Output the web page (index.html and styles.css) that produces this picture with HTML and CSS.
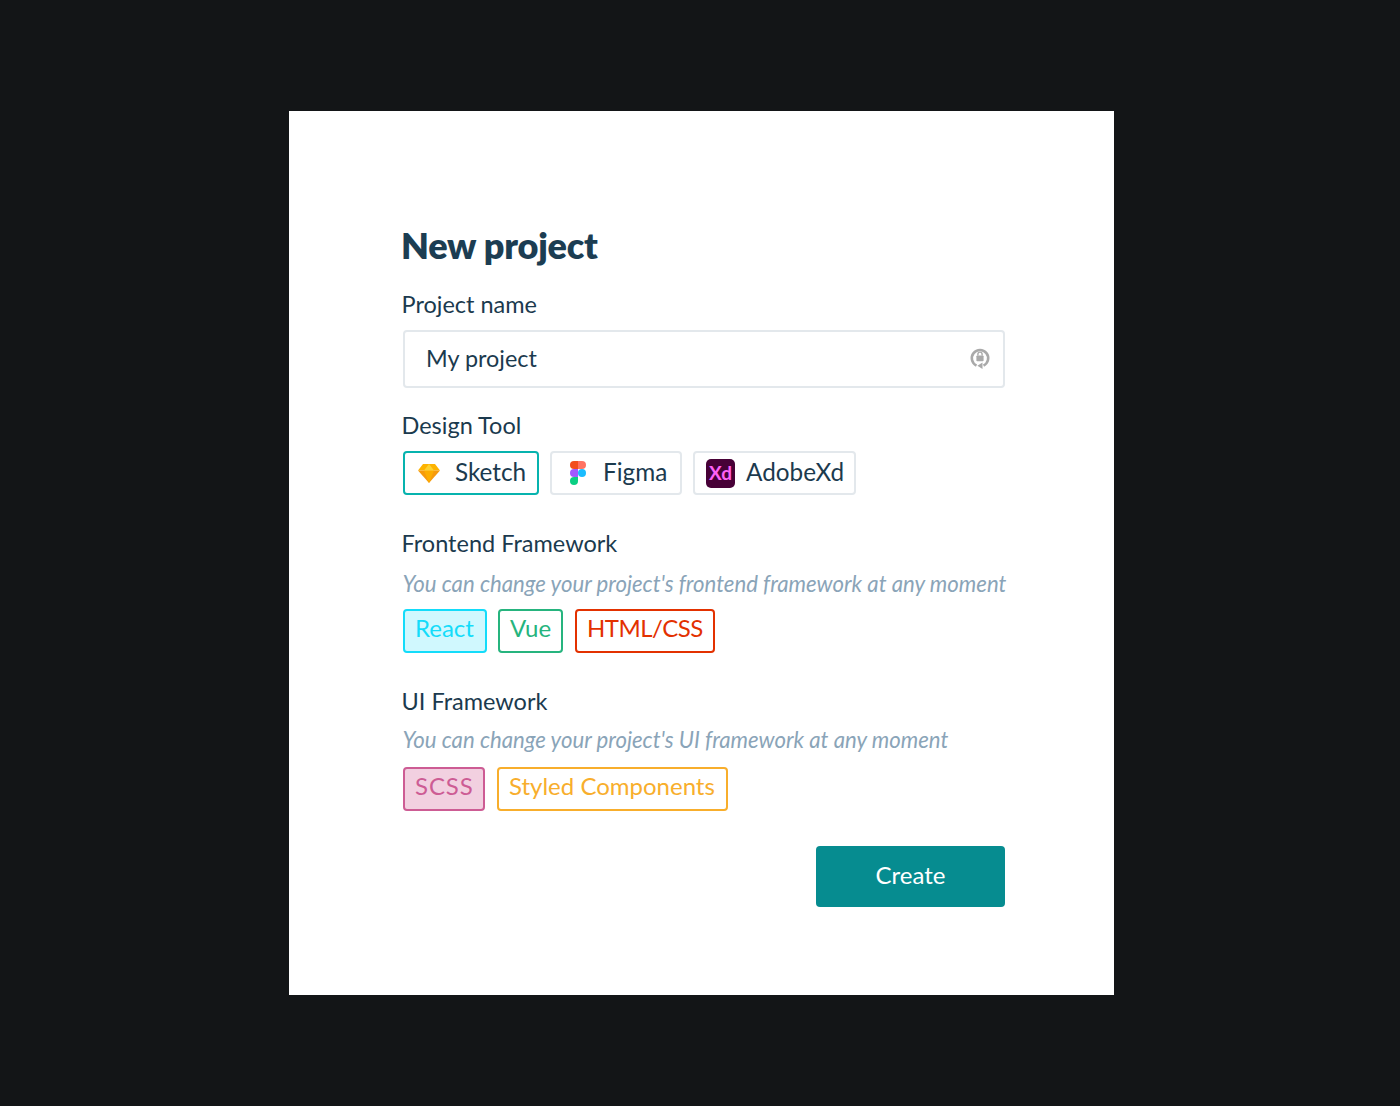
FILE: index.html
```html
<!DOCTYPE html>
<html lang="en">

<head>
    <meta charset="UTF-8">
    <meta name="viewport" content="width=device-width, initial-scale=1.0">
    <title>New project</title>
    <link rel="stylesheet" href="styles.css">
</head>

<body>
    <div class="card">
        <h1 class="title">New project</h1>

        <div class="label label-name">Project name</div>
        <div class="name-input">
            <span class="input-text">My project</span>
            <svg class="lock-icon" width="22" height="24" viewBox="0 0 22 24">
                <path d="M7.5 19.6A8.2 8.2 0 1 1 14.5 19.6" fill="none" stroke="#a9a9a9" stroke-width="2.6" />
                <path d="M13.5 16.6V23L8.4 19.8Z" fill="#a9a9a9" />
                <rect x="7.4" y="9.4" width="7.2" height="5.8" rx="0.8" fill="#a9a9a9" />
                <path d="M8.9 9.6V8.2a2.1 2.1 0 0 1 4.2 0V9.6" fill="none" stroke="#a9a9a9" stroke-width="1.4" />
            </svg>
        </div>

        <div class="label label-tool">Design Tool</div>
        <div class="chip-row tool-row">
            <div class="chip tool-chip sketch-chip">
                <svg class="sketch-icon" width="22" height="20" viewBox="0 0 22 20">
                    <path d="M5 1H17L22 7.5H0Z" fill="#fdb300" />
                    <path d="M0 7.5H22L11 20Z" fill="#f69a0c" />
                    <path d="M6 7.5H16L11 20Z" fill="#fdad00" />
                    <path d="M6 7.5L11 1L16 7.5Z" fill="#fdd231" />
                </svg>
                <span class="chip-text">Sketch</span>
            </div>
            <div class="chip tool-chip figma-chip">
                <svg class="figma-icon" width="16" height="24" viewBox="0 0 16 24">
                    <path d="M8 0H4a4 4 0 0 0 0 8H8Z" fill="#f24e1e" />
                    <path d="M8 0H12a4 4 0 0 1 0 8H8Z" fill="#ff7262" />
                    <path d="M8 8H4a4 4 0 0 0 0 8H8Z" fill="#a259ff" />
                    <circle cx="12" cy="12" r="4" fill="#1abcfe" />
                    <path d="M8 16H4a4 4 0 1 0 4 4Z" fill="#0acf83" />
                </svg>
                <span class="chip-text">Figma</span>
            </div>
            <div class="chip tool-chip xd-chip">
                <span class="xd-icon">Xd</span>
                <span class="chip-text">AdobeXd</span>
            </div>
        </div>

        <div class="label label-frontend">Frontend Framework</div>
        <div class="hint hint-frontend">You can change your project's frontend framework at any moment</div>
        <div class="chip-row">
            <div class="chip tag react">React</div>
            <div class="chip tag vue">Vue</div>
            <div class="chip tag html">HTML/CSS</div>
        </div>

        <div class="label label-ui">UI Framework</div>
        <div class="hint hint-ui">You can change your project's UI framework at any moment</div>
        <div class="chip-row">
            <div class="chip tag scss">SCSS</div>
            <div class="chip tag styled">Styled Components</div>
        </div>

        <div class="actions">
            <button class="create-button">Create</button>
        </div>
    </div>
</body>

</html>
```

FILE: styles.css
```css
body {
    margin: 0;
    height: 1106px;
    padding: 111px 0 0 289px;
    box-sizing: border-box;
    overflow: hidden;
    background-color: #131517;
    font-family: "Lato", "Noto Sans", sans-serif;
    color: #1b3a4e;
}

.card {
    width: 825px;
    height: 884px;
    box-sizing: border-box;
    padding: 113px 109px 0 114px;
    background-color: white;
}

.title {
    margin: 0 0 0 -2px;
    font-size: 36px;
    line-height: 42px;
    font-weight: 800;
    letter-spacing: -0.2px;
    color: #1c3d52;
}

.label {
    margin-left: -1.5px;
    font-size: 23.5px;
    line-height: 30px;
}

.label-name {
    margin-top: 23px;
}

.label-tool {
    margin-top: 22px;
}

.label-frontend {
    margin-top: 33px;
}

.label-ui {
    margin-top: 33px;
}

.name-input {
    display: flex;
    justify-content: space-between;
    align-items: center;
    height: 58px;
    margin-top: 11px;
    padding: 0 12px 0 21px;
    box-sizing: border-box;
    border: 2px solid #e3e8ec;
    border-radius: 4px;
    font-size: 23.4px;
}

.input-text {
    padding-bottom: 2px;
}

.lock-icon {
    margin-bottom: 2px;
}

.chip-row {
    display: flex;
    gap: 11px;
    margin-top: 9px;
}

.tool-row {
    margin-top: 11px;
}

.chip {
    display: flex;
    align-items: center;
    height: 44px;
    box-sizing: border-box;
    border: 2px solid #e3e8ec;
    border-radius: 4px;
    font-size: 24px;
    white-space: nowrap;
}

.chip-text {
    padding-bottom: 4px;
}

.tool-chip {
    padding: 0 8px 0 12px;
    font-size: 24.3px;
}

.sketch-chip {
    width: 136px;
    border-color: #07b3ae;
}

.figma-chip {
    width: 132px;
}

.xd-chip {
    width: 163px;
    padding-left: 11px;
}

.sketch-icon {
    flex: none;
    margin: 0 15px 0 1px;
}

.figma-icon {
    flex: none;
    margin: 0 17px 0 6px;
}

.xd-icon {
    flex: none;
    width: 29px;
    height: 29px;
    margin-right: 11px;
    border-radius: 5px;
    background-color: #470137;
    color: #ff61f6;
    font-size: 19px;
    font-weight: 700;
    line-height: 27px;
    text-align: center;
}

.hint {
    margin-left: -0.5px;
    font-size: 22.2px;
    line-height: 28px;
    font-style: italic;
    color: #8aa4b8;
    white-space: nowrap;
}

.hint-frontend {
    margin-top: 12px;
    margin-bottom: 11px;
}

.hint-ui {
    margin-top: 10px;
    margin-bottom: 13px;
}

.tag {
    padding: 0 10px 8px 10px;
}

.react {
    width: 84px;
    color: #13dcfa;
    border-color: #13dcfa;
    background-color: #d0f8fe;
}

.vue {
    width: 65px;
    color: #26b47e;
    border-color: #26b47e;
}

.html {
    width: 140px;
    margin-left: 1px;
    letter-spacing: -0.5px;
    color: #e33100;
    border-color: #e33100;
}

.scss {
    width: 82px;
    letter-spacing: 0.9px;
    color: #cd5c94;
    border-color: #cd5c94;
    background-color: #f2d0e0;
}

.styled {
    width: 231px;
    margin-left: 1px;
    color: #f8ae2c;
    border-color: #f8ae2c;
}

.actions {
    display: flex;
    justify-content: flex-end;
    margin-top: 35px;
}

.create-button {
    width: 189px;
    height: 61px;
    padding-bottom: 5px;
    border: none;
    border-radius: 4px;
    background-color: #068c90;
    color: white;
    font-family: inherit;
    font-size: 24px;
}
```
